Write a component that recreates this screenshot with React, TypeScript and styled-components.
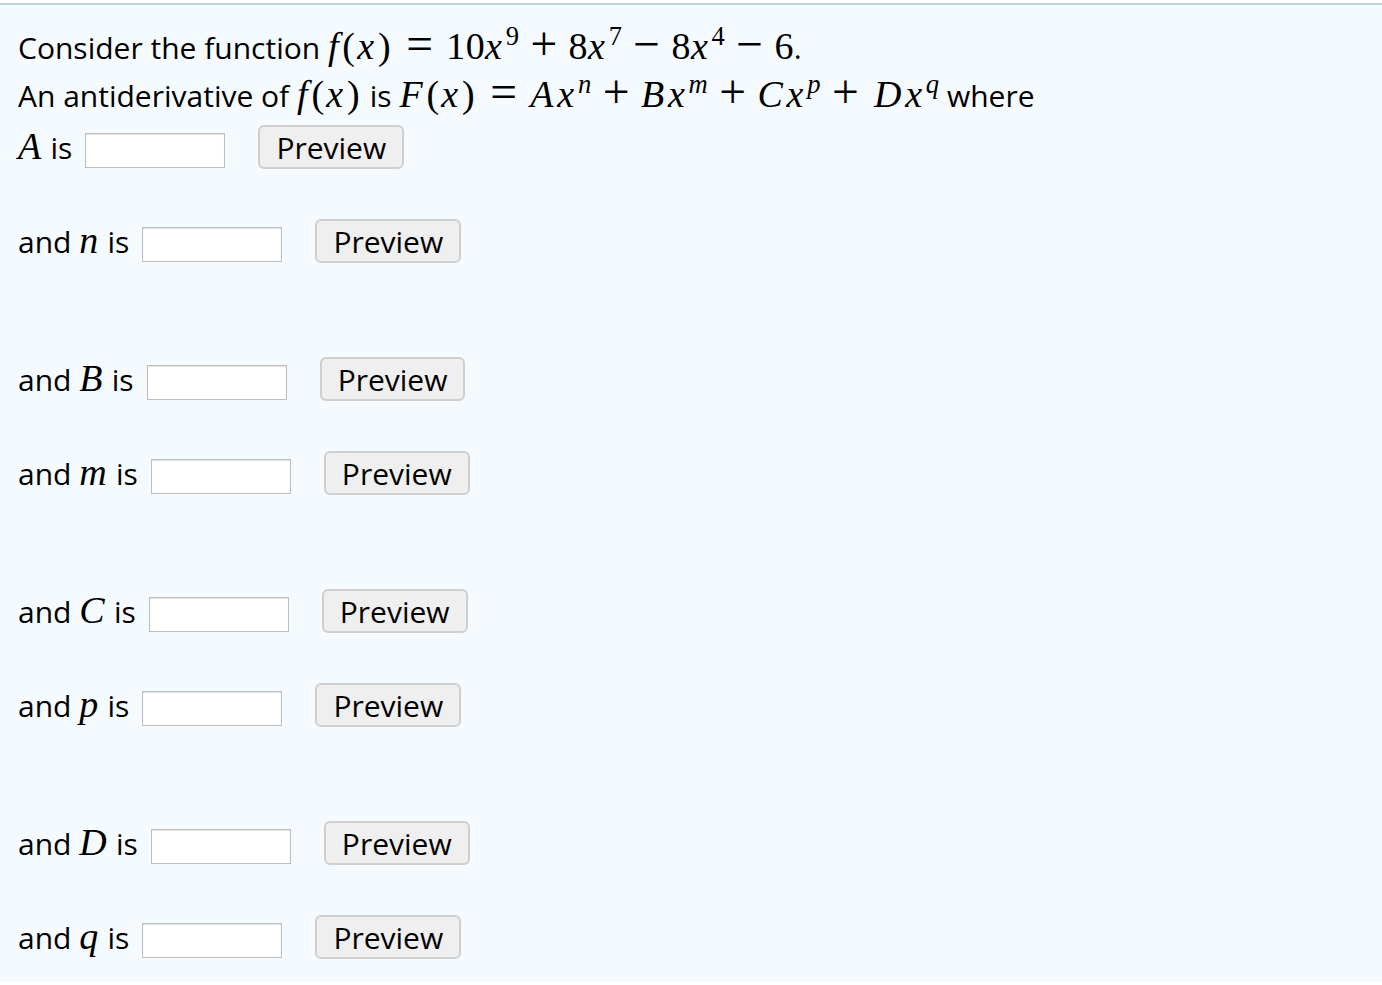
import React from "react";
import styled, { createGlobalStyle } from "styled-components";

const Global = createGlobalStyle`
  html, body { margin: 0; padding: 0; background: #ffffff; }
  body { font-family: "Open Sans", "Noto Sans", sans-serif; color: #000; }
`;

const Page = styled.div`
  margin-top: 3px;
  border-top: 2px solid #c4d4dd;
  background: #f5faff;
  min-height: 980px;
  padding: 19px 0 0 18px;
  box-sizing: border-box;
`;

const Problem = styled.div`
  font-size: 30px;
  line-height: 48px;
`;

const Line = styled.div`
  white-space: nowrap;
`;

const Math = styled.span`
  font-family: "Liberation Serif", "Times New Roman", serif;
  font-size: 38px;
  line-height: 1;
  letter-spacing: 0.06em;
  white-space: nowrap;
`;

const LabelVar = styled(Math)`
  letter-spacing: 0;
`;

const MI = styled.span<{ $lb?: boolean }>`
  font-style: italic;
  padding-right: 0.04em;
  padding-left: ${(p) => (p.$lb ? "0.1em" : "0")};
`;

const MN = styled.span`
  font-style: normal;
  letter-spacing: 0.01em;
`;

const MO = styled.span<{ $rel?: boolean }>`
  font-style: normal;
  font-size: 1.25em;
  line-height: 0;
  letter-spacing: 0;
  vertical-align: -0.02em;
  margin: 0 ${(p) => (p.$rel ? "0.28em" : "0.24em")};
`;

const Sup = styled.sup<{ $italic?: boolean }>`
  font-size: 0.7em;
  line-height: 1;
  letter-spacing: 0;
  vertical-align: 0;
  position: relative;
  top: -0.52em;
  font-style: ${(p) => (p.$italic ? "italic" : "normal")};
`;

const Groups = styled.div`
  display: flex;
  flex-direction: column;
  gap: 94px;
  margin-top: 5px;
`;

const Pair = styled.div`
  display: flex;
  flex-direction: column;
  gap: 50px;
`;

const Row = styled.div`
  display: flex;
  align-items: center;
  height: 44px;
  font-size: 30px;
`;

const Label = styled.span`
  white-space: nowrap;
  margin-right: 13px;
`;

const Input = styled.input`
  width: 140px;
  height: 35px;
  box-sizing: border-box;
  border: 1px solid #bdbdbd;
  box-shadow: inset 0 1px 1px #e2e2e2;
  background: #fff;
  margin: 6px 33px 0 0;
  padding: 0;
  font-size: 20px;
`;

const Button = styled.button`
  height: 44px;
  box-sizing: border-box;
  padding: 0 16px 2px;
  border: 2px solid #cfcfcf;
  border-radius: 6px;
  background: #efefef;
  font-family: "Open Sans", "Noto Sans", sans-serif;
  font-size: 30px;
  color: #000;
`;

const X = () => <MI>x</MI>;

const rows: [string, string][][] = [
  [["A", ""], ["n", "and "]],
  [["B", "and "], ["m", "and "]],
  [["C", "and "], ["p", "and "]],
  [["D", "and "], ["q", "and "]],
];

export default function App() {
  return (
    <>
      <Global />
      <Page>
        <Problem>
          <Line>
            Consider the function{" "}
            <Math>
              <MI>f</MI>(<X />)<MO $rel>=</MO>
              <MN>10</MN>
              <X />
              <Sup>9</Sup>
              <MO>+</MO>
              <MN>8</MN>
              <X />
              <Sup>7</Sup>
              <MO>−</MO>
              <MN>8</MN>
              <X />
              <Sup>4</Sup>
              <MO>−</MO>
              <MN>6</MN>
            </Math>
            .
          </Line>
          <Line>
            An antiderivative of{" "}
            <Math>
              <MI>f</MI>(<X />)
            </Math>{" "}
            is{" "}
            <Math>
              <MI>F</MI>(<X />)<MO $rel>=</MO>
              <MI>A</MI>
              <X />
              <Sup $italic>n</Sup>
              <MO>+</MO>
              <MI>B</MI>
              <X />
              <Sup $italic>m</Sup>
              <MO>+</MO>
              <MI>C</MI>
              <X />
              <Sup $italic>p</Sup>
              <MO>+</MO>
              <MI $lb>D</MI>
              <X />
              <Sup $italic>q</Sup>
            </Math>{" "}
            where
          </Line>
        </Problem>
        <Groups>
          {rows.map((pair, i) => (
            <Pair key={i}>
              {pair.map(([v, pre]) => (
                <Row key={v}>
                  <Label>
                    {pre}
                    <LabelVar>
                      <MI>{v}</MI>
                    </LabelVar>{" "}
                    is
                  </Label>
                  <Input type="text" aria-label={v} />
                  <Button type="button">Preview</Button>
                </Row>
              ))}
            </Pair>
          ))}
        </Groups>
      </Page>
    </>
  );
}
